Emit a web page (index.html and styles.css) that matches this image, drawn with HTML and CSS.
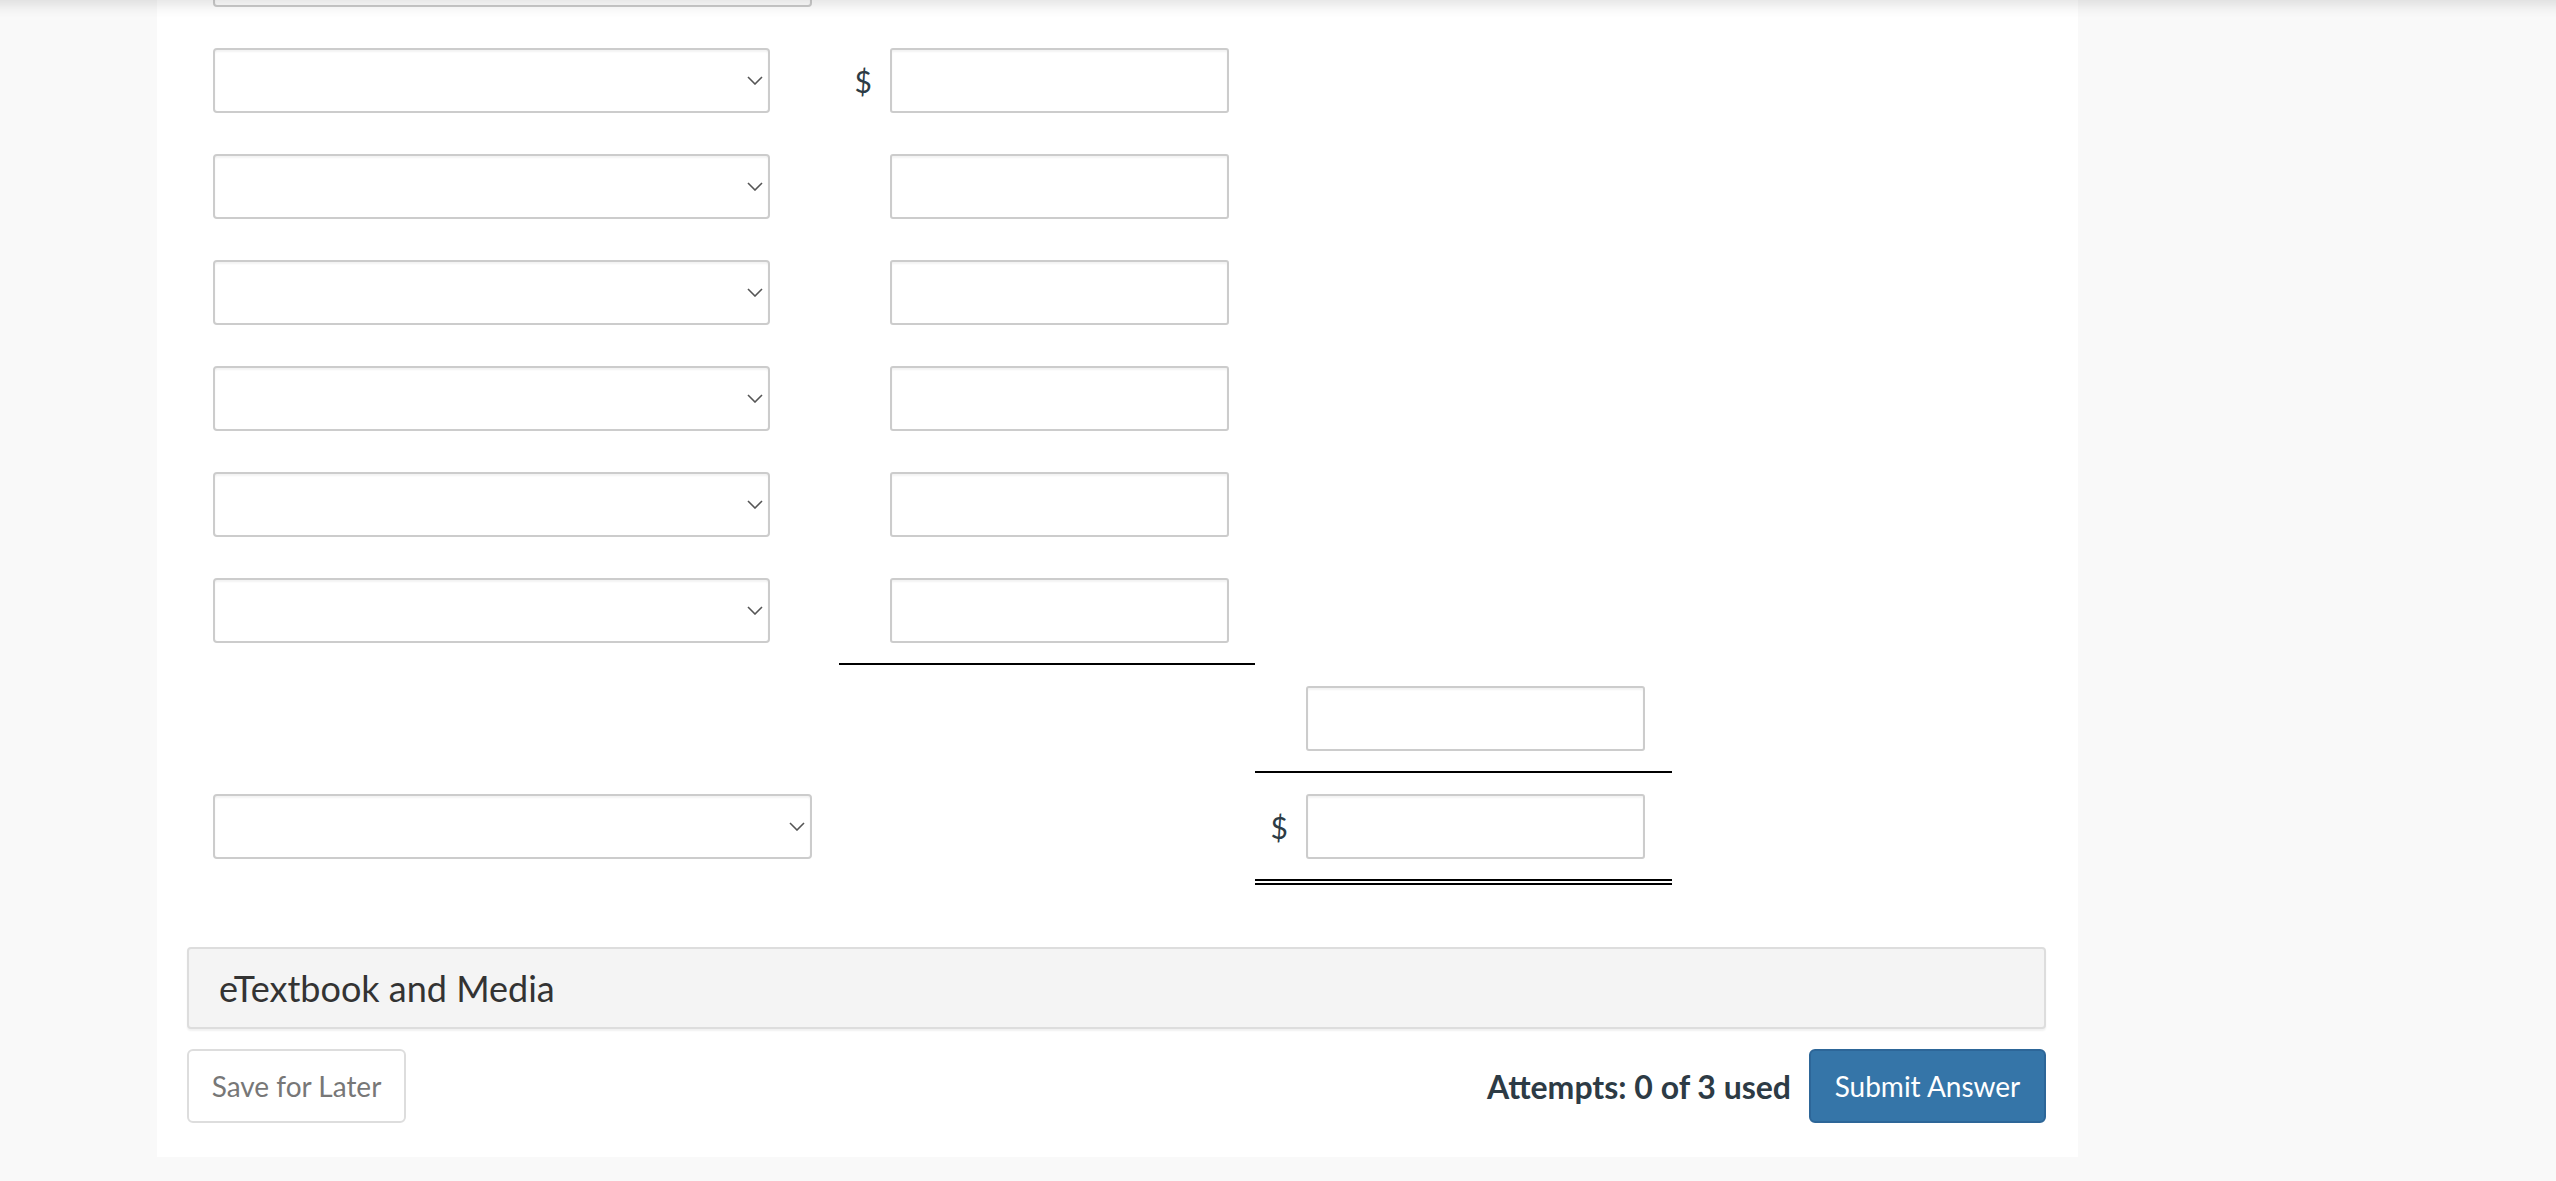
FILE: index.html
```html
<!DOCTYPE html>
<html lang="en">
<head>
<meta charset="utf-8">
<title>Question</title>
<link rel="stylesheet" href="styles.css">
</head>
<body>
<div class="top-shadow"></div>
<main class="card">
  <div class="rows">
    <div class="row">
      <div class="col-a"><div class="select wide"><svg class="chev" viewBox="0 0 16 9"><path d="M1 1 L8 8 L15 1"/></svg></div></div>
    </div>
    <div class="row">
      <div class="col-a"><div class="select"><svg class="chev" viewBox="0 0 16 9"><path d="M1 1 L8 8 L15 1"/></svg></div></div>
      <div class="col-b"><span class="cur">$</span><input class="field" type="text"></div>
    </div>
    <div class="row">
      <div class="col-a"><div class="select"><svg class="chev" viewBox="0 0 16 9"><path d="M1 1 L8 8 L15 1"/></svg></div></div>
      <div class="col-b"><span class="cur"></span><input class="field" type="text"></div>
    </div>
    <div class="row">
      <div class="col-a"><div class="select"><svg class="chev" viewBox="0 0 16 9"><path d="M1 1 L8 8 L15 1"/></svg></div></div>
      <div class="col-b"><span class="cur"></span><input class="field" type="text"></div>
    </div>
    <div class="row">
      <div class="col-a"><div class="select"><svg class="chev" viewBox="0 0 16 9"><path d="M1 1 L8 8 L15 1"/></svg></div></div>
      <div class="col-b"><span class="cur"></span><input class="field" type="text"></div>
    </div>
    <div class="row">
      <div class="col-a"><div class="select"><svg class="chev" viewBox="0 0 16 9"><path d="M1 1 L8 8 L15 1"/></svg></div></div>
      <div class="col-b"><span class="cur"></span><input class="field" type="text"></div>
    </div>
    <div class="row">
      <div class="col-a"><div class="select"><svg class="chev" viewBox="0 0 16 9"><path d="M1 1 L8 8 L15 1"/></svg></div></div>
      <div class="col-b"><span class="cur"></span><input class="field" type="text"></div>
    </div>
  </div>

  <div class="rule-row rule-b-row"><div class="spacer-a"></div><div class="rule rule-b"></div></div>

  <div class="row row-sub">
    <div class="col-a"></div>
    <div class="col-b"></div>
    <div class="col-c"><span class="cur"></span><input class="field" type="text"></div>
  </div>

  <div class="rule-row rule-c-row"><div class="spacer-ab"></div><div class="rule rule-c"></div></div>

  <div class="row row-total">
    <div class="col-a"><div class="select wide"><svg class="chev" viewBox="0 0 16 9"><path d="M1 1 L8 8 L15 1"/></svg></div></div>
    <div class="col-b"></div>
    <div class="col-c"><span class="cur">$</span><input class="field" type="text"></div>
  </div>

  <div class="rule-row double-row"><div class="spacer-ab"></div><div class="rule-double"></div></div>

  <section class="panel">eTextbook and Media</section>

  <div class="actions">
    <button class="btn-save" type="button">Save for Later</button>
    <div class="submit-group">
      <span class="attempts">Attempts: 0 of 3 used</span>
      <button class="btn-submit" type="button">Submit Answer</button>
    </div>
  </div>
</main>
</body>
</html>
```

FILE: styles.css
```css
html, body {
  margin: 0;
  padding: 0;
}

body {
  background: #f9f9f9;
  font-family: Lato, "Open Sans", "Liberation Sans", sans-serif;
  color: #2d3b45;
  overflow: hidden;
  height: 1181px;
}

.top-shadow {
  position: fixed;
  top: 0;
  left: 0;
  right: 0;
  height: 18px;
  background: linear-gradient(to bottom, rgba(0,0,0,0.09), rgba(0,0,0,0.02) 60%, rgba(0,0,0,0));
  pointer-events: none;
  z-index: 5;
}

.card {
  display: block;
  background: #ffffff;
  width: 1921px;
  box-sizing: border-box;
  margin: -58px 0 0 157px;
  padding: 0 32px 34px 30px;
}

.rows {
  display: flex;
  flex-direction: column;
  gap: 41px;
}

.row {
  display: flex;
  height: 65px;
  padding-left: 26px;
}

.col-a {
  width: 626px;
  flex: none;
  display: flex;
  align-items: center;
}

.col-b {
  width: 416px;
  flex: none;
  display: flex;
  align-items: center;
}

.col-c {
  width: 417px;
  flex: none;
  display: flex;
  align-items: center;
}

.select {
  width: 557px;
  height: 65px;
  box-sizing: border-box;
  border: 2px solid #cccccc;
  border-radius: 4px;
  background: #ffffff;
  box-shadow: inset 0 2px 2px rgba(0,0,0,0.05);
  display: flex;
  align-items: center;
  justify-content: flex-end;
  padding-right: 5px;
}

.select.wide {
  width: 599px;
}

.chev {
  width: 16px;
  height: 9px;
  fill: none;
  stroke: #555555;
  stroke-width: 1.6;
}

.cur {
  width: 51px;
  flex: none;
  box-sizing: border-box;
  padding-right: 18px;
  text-align: right;
  font-size: 30px;
  color: #2d3b45;
  line-height: 1;
}

.field {
  width: 339px;
  height: 65px;
  box-sizing: border-box;
  margin: 0;
  border: 2px solid #cccccc;
  border-radius: 3px;
  background: #ffffff;
  box-shadow: inset 0 2px 2px rgba(0,0,0,0.05);
  font-family: inherit;
  font-size: 26px;
  padding: 0 10px;
  outline: none;
}

.rule-row {
  display: flex;
  padding-left: 26px;
}

.spacer-a {
  width: 626px;
  flex: none;
}

.spacer-ab {
  width: 1042px;
  flex: none;
}

.rule {
  height: 2px;
  background: #000000;
}

.rule-b {
  width: 416px;
}

.rule-c {
  width: 417px;
}

.rule-b-row {
  margin-top: 20px;
}

.row-sub {
  margin-top: 21px;
}

.rule-c-row {
  margin-top: 20px;
}

.row-total {
  margin-top: 21px;
}

.double-row {
  margin-top: 20px;
}

.rule-double {
  width: 417px;
  height: 2px;
  border-top: 2px solid #000000;
  border-bottom: 2px solid #000000;
}

.panel {
  margin-top: 62px;
  height: 82px;
  box-sizing: border-box;
  background: #f4f4f4;
  border: 2px solid #dddddd;
  border-radius: 4px;
  box-shadow: 0 2px 2px rgba(0,0,0,0.06);
  padding: 0 30px;
  display: flex;
  align-items: center;
  font-size: 36px;
  color: #333333;
}

.actions {
  margin-top: 20px;
  display: flex;
  align-items: center;
  justify-content: space-between;
}

.btn-save {
  height: 74px;
  width: 219px;
  box-sizing: border-box;
  background: #ffffff;
  border: 2px solid #dddddd;
  border-radius: 6px;
  font-family: inherit;
  font-size: 28px;
  color: #777777;
  padding: 0;
}

.submit-group {
  display: flex;
  align-items: center;
  gap: 18px;
}

.attempts {
  font-weight: 700;
  font-size: 32px;
  color: #2d3b45;
}

.btn-submit {
  height: 74px;
  width: 237px;
  box-sizing: border-box;
  background: #3575a8;
  border: 2px solid #2d6698;
  border-radius: 6px;
  font-family: inherit;
  font-size: 28px;
  color: #ffffff;
  padding: 0;
}
```
